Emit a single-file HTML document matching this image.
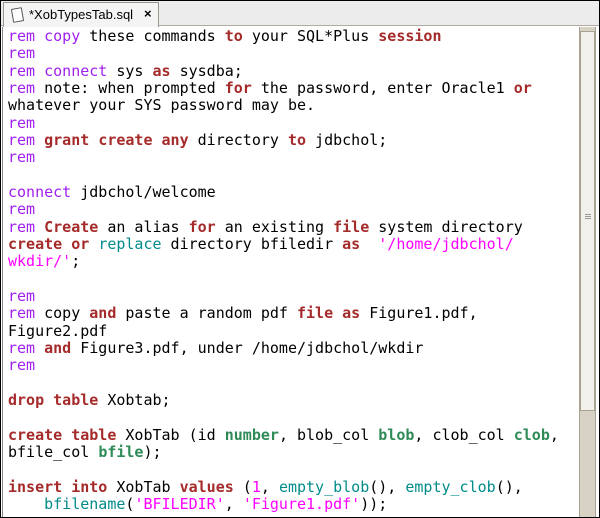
<!DOCTYPE html>
<html><head><style>
*{margin:0;padding:0;box-sizing:border-box}
body{width:600px;height:518px;background:#fff;position:relative;overflow:hidden;border:1px solid #000}
.top{position:absolute;left:0;top:0;width:598px;height:25px;background:#ececec;border-bottom:1px solid #b0aca4}
.tab{position:absolute;left:2px;top:1px;width:156px;height:25px;background:#f4f4f4;border:1px solid #9a968e;border-bottom:none;font:13px "Liberation Sans",sans-serif;color:#000}
.tab .t{position:absolute;left:25px;top:4px}
.tab .x{position:absolute;left:140px;top:3px;font-weight:bold;font-size:13px}
.ico{position:absolute;left:8px;top:5px;width:11px;height:14px;border:1px solid #555;background:#fff;transform:rotate(-10deg);border-radius:1px}
.ed{position:absolute;left:1px;top:26px;width:576px;height:490px;border-left:1px solid #888}
pre{position:absolute;left:7px;top:27px;font:15px/17.33px "DejaVu Sans Mono","Liberation Mono",monospace;color:#000}
.p{color:#a020f0}.k{color:#a52a2a;font-weight:bold}.g{color:#2e8b57;font-weight:bold}.c{color:#008b8b}.s{color:#f0f}
.sb{position:absolute;left:578px;top:26px;width:17px;height:490px;background:#d8d2c4;border-left:1px solid #a8a294;border-right:1px solid #a8a294}
.th{position:absolute;left:0;top:4px;width:15px;height:380px;background:#f2f0ea;border:1px solid #a8a294}
.grip{position:absolute;left:4px;top:182px;width:6px;height:5px;border-top:1px solid #999;border-bottom:1px solid #999}
.grip:after{content:"";position:absolute;left:0;top:1px;width:6px;height:1px;background:#999}
</style></head><body>
<div class="top"><div class="tab"><div class="ico"></div><span class="t">*XobTypesTab.sql</span><span class="x">×</span></div></div>
<div class="ed"></div>
<pre><span class="p">rem</span> <span class="p">copy</span> these commands <span class="k">to</span> your SQL*Plus <span class="k">session</span>
<span class="p">rem</span>
<span class="p">rem</span> <span class="p">connect</span> sys <span class="k">as</span> sysdba;
<span class="p">rem</span> note: when prompted <span class="k">for</span> the password, enter Oracle1 <span class="k">or</span>
whatever your SYS password may be.
<span class="p">rem</span>
<span class="p">rem</span> <span class="k">grant</span> <span class="k">create</span> <span class="k">any</span> directory <span class="k">to</span> jdbchol;
<span class="p">rem</span>

<span class="p">connect</span> jdbchol/welcome
<span class="p">rem</span>
<span class="p">rem</span> <span class="k">Create</span> an alias <span class="k">for</span> an existing <span class="k">file</span> system directory
<span class="k">create</span> <span class="k">or</span> <span class="c">replace</span> directory bfiledir <span class="k">as</span>  <span class="s">'/home/jdbchol/</span>
<span class="s">wkdir/'</span>;

<span class="p">rem</span>
<span class="p">rem</span> copy <span class="k">and</span> paste a random pdf <span class="k">file</span> <span class="k">as</span> Figure1.pdf,
Figure2.pdf
<span class="p">rem</span> <span class="k">and</span> Figure3.pdf, under /home/jdbchol/wkdir
<span class="p">rem</span>

<span class="k">drop</span> <span class="k">table</span> Xobtab;

<span class="k">create</span> <span class="k">table</span> XobTab (id <span class="g">number</span>, blob_col <span class="g">blob</span>, clob_col <span class="g">clob</span>,
bfile_col <span class="g">bfile</span>);

<span class="k">insert</span> <span class="k">into</span> XobTab <span class="k">values</span> (<span class="s">1</span>, <span class="c">empty_blob</span>(), <span class="c">empty_clob</span>(),
    <span class="c">bfilename</span>(<span class="s">'BFILEDIR'</span>, <span class="s">'Figure1.pdf'</span>));</pre>
<div class="sb"><div class="th"><div class="grip"></div></div></div>
</body></html>
